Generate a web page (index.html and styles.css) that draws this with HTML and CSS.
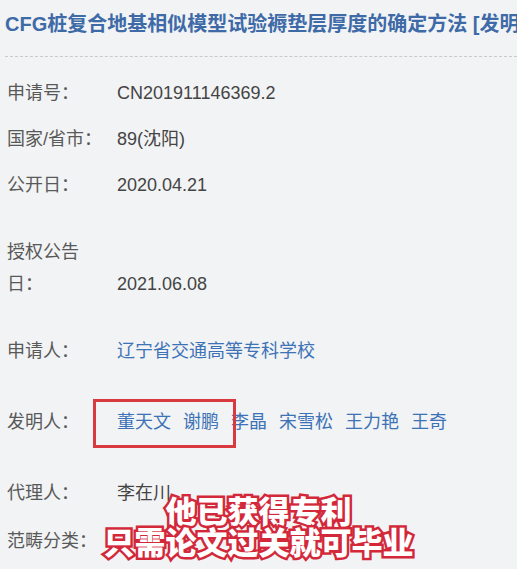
FILE: index.html
```html
<!DOCTYPE html>
<html lang="zh-CN">
<head>
<meta charset="UTF-8">
<meta name="viewport" content="width=device-width, initial-scale=1.0">
<title>专利详情</title>
<link rel="stylesheet" href="styles.css">
</head>
<body>
<div class="patent">
  <h1 class="patent-title">CFG桩复合地基相似模型试验褥垫层厚度的确定方法 [发明专利]</h1>

  <div class="info-list">
    <div class="row">
      <span class="label">申请号：</span>
      <span class="value">CN201911146369.2</span>
    </div>
    <div class="row">
      <span class="label">国家/省市：</span>
      <span class="value">89(沈阳)</span>
    </div>
    <div class="row">
      <span class="label">公开日：</span>
      <span class="value">2020.04.21</span>
    </div>
    <div class="row spaced">
      <span class="label">授权公告日：</span>
      <span class="value">2021.06.08</span>
    </div>
    <div class="row spaced">
      <span class="label">申请人：</span>
      <span class="value link">辽宁省交通高等专科学校</span>
    </div>
    <div class="row spaced wide">
      <span class="label">发明人：</span>
      <span class="value names">
        <a class="link">董天文</a>
        <a class="link">谢鹏</a>
        <a class="link">李晶</a>
        <a class="link">宋雪松</a>
        <a class="link">王力艳</a>
        <a class="link">王奇</a>
      </span>
      <!-- highlight around the first two inventors -->
      <span class="mark-box"></span>
    </div>
    <div class="row spaced wide">
      <span class="label">代理人：</span>
      <span class="value">李在川</span>
    </div>
    <div class="row last">
      <span class="label">范畴分类：</span>
      <span class="value"></span>
    </div>
  </div>
</div>

<div class="caption">
  <div>他已获得专利</div>
  <div>只需论文过关就可毕业</div>
</div>
</body>
</html>
```

FILE: styles.css
```css
* {
  box-sizing: border-box;
}

body {
  margin: 0;
  padding: 0;
  background-color: #f2f3f4;
  font-family: "Liberation Sans", "Noto Sans CJK SC", sans-serif;
  overflow: hidden;
  height: 569px;
  position: relative;
}

.patent {
  padding: 10px 0 0 5px;
}

.patent-title {
  margin: 0;
  font-size: 20px;
  font-weight: bold;
  color: #3e6ba8;
  line-height: 28px;
  white-space: nowrap;
  overflow: hidden;
  padding-bottom: 18px;
  border-bottom: 1px dashed #c9cacc;
}

.info-list {
  padding: 13px 0 0 2px;
}

.row {
  display: flex;
  align-items: flex-end;
  padding: 7px 0;
  font-size: 18px;
  line-height: 32px;
  position: relative;
}

.row.spaced {
  margin-top: 21px;
}

.row.wide {
  margin-top: 25px;
}

.row.last {
  margin-top: 2px;
}

.label {
  width: 100px;
  margin-right: 10px;
  color: #595959;
}

.value {
  color: #444;
}

.link {
  color: #3c72b6;
}

.names {
  display: flex;
  gap: 12px;
}

.mark-box {
  position: absolute;
  left: 86px;
  top: 0;
  width: 143px;
  height: 49px;
  border: 3px solid #d93a40;
}

.caption {
  position: absolute;
  left: 0;
  right: 0;
  top: 494px;
  text-align: center;
  font-family: "Noto Sans CJK SC", sans-serif;
  font-weight: 900;
  font-size: 31px;
  line-height: 31px;
  color: #fff;
  -webkit-text-stroke: 5px #d3283a;
  paint-order: stroke fill;
}
```
